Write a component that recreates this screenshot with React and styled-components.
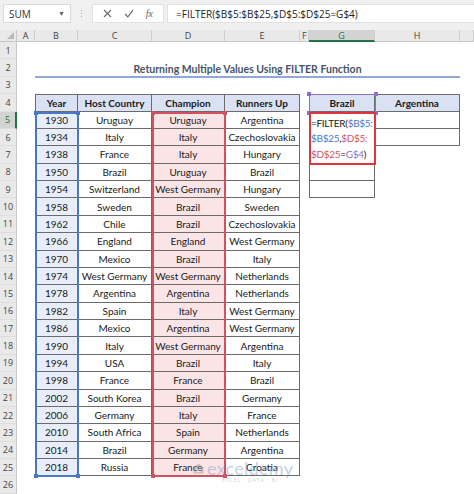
import React from "react";
import styled, { createGlobalStyle } from "styled-components";

const GlobalStyle = createGlobalStyle`
  html, body { margin: 0; padding: 0; background: #ffffff; }
  body { font-family: "Lato", "Liberation Sans", sans-serif; }
`;

const ROW_H = 17.38;

const Sheet = styled.div`
  position: relative;
  width: 474px;
  height: 494px;
  overflow: hidden;
  background: #ffffff;
`;

const FormulaBar = styled.div`
  height: 30px;
  box-sizing: border-box;
  background: #f0f0f0;
  display: flex;
  align-items: flex-start;
  padding: 4px 0 0 3px;
`;

const NameBox = styled.div`
  width: 68px;
  height: 19px;
  box-sizing: border-box;
  background: #fff;
  border: 1px solid #dadada;
  display: flex;
  align-items: center;
  justify-content: space-between;
  padding: 0 5px 0 5px;
  font-family: "Open Sans", "Liberation Sans", sans-serif;
  font-size: 10px;
  color: #333;
`;

const Caret = styled.span`
  font-size: 7px;
  color: #666;
`;

const Dots = styled.div`
  width: 21px;
  height: 19px;
  display: flex;
  flex-direction: column;
  align-items: center;
  justify-content: center;
  gap: 2px;
  & > i {
    display: block;
    width: 1px;
    height: 1px;
    background: #a8a8a8;
  }
`;

const IconBox = styled.div`
  width: 72px;
  height: 19px;
  box-sizing: border-box;
  background: #fff;
  border: 1px solid #e2e2e2;
  display: flex;
  align-items: center;
  justify-content: space-around;
  padding: 0 4px;
  color: #6a6a6a;
`;

const Fx = styled.span`
  font-family: "Liberation Serif", serif;
  font-style: italic;
  font-size: 10px;
  color: #666;
`;

const FormulaInput = styled.div`
  flex: 1;
  height: 19px;
  margin-left: 3px;
  box-sizing: border-box;
  background: #fff;
  border: 1px solid #e2e2e2;
  border-right: none;
  display: flex;
  align-items: center;
  padding-left: 8px;
  font-family: "Open Sans", "Liberation Sans", sans-serif;
  font-size: 10px;
  color: #222;
  white-space: nowrap;
`;

const Grid = styled.div`
  display: grid;
  grid-template-columns: 17px 18px 43px 74px 73px 75px 9px 66px 85px 1fr;
  grid-template-rows: 12px repeat(26, ${ROW_H}px);
`;

const Corner = styled.div`
  grid-row: 1;
  grid-column: 1;
  background: #e9e9e9;
  border-bottom: 1px solid #c8c8c8;
  border-right: 1px solid #c8c8c8;
  box-sizing: border-box;
  position: relative;
  &::after {
    content: "";
    position: absolute;
    right: 2px;
    bottom: 2px;
    border-left: 7px solid transparent;
    border-bottom: 7px solid #b8b8b8;
  }
`;

const ColHead = styled.div`
  grid-row: 1;
  grid-column: ${(p) => p.$c};
  box-sizing: border-box;
  background: ${(p) => (p.$active ? "#d3d3d3" : "#e9e9e9")};
  border-right: 1px solid #cdcdcd;
  border-bottom: ${(p) => (p.$active ? "2px solid #217346" : "1px solid #c8c8c8")};
  display: flex;
  align-items: center;
  justify-content: ${(p) => (p.$left ? "flex-start" : "center")};
  padding-left: ${(p) => (p.$left ? "2px" : "0")};
  font-family: "Open Sans", "Liberation Sans", sans-serif;
  font-size: 9px;
  color: ${(p) => (p.$active ? "#3d6b50" : "#444")};
  overflow: hidden;
`;

const RowHead = styled.div`
  grid-row: ${(p) => p.$r};
  grid-column: 1;
  box-sizing: border-box;
  background: ${(p) => (p.$active ? "#d3d3d3" : "#e9e9e9")};
  border-right: ${(p) => (p.$active ? "2px solid #217346" : "1px solid #c8c8c8")};
  border-bottom: 1px solid #dedede;
  display: flex;
  align-items: center;
  justify-content: center;
  font-family: "Open Sans", "Liberation Sans", sans-serif;
  font-size: 9px;
  color: ${(p) => (p.$active ? "#217346" : "#444")};
`;

const Title = styled.div`
  grid-row: 3;
  grid-column: 3 / 10;
  box-sizing: border-box;
  border-bottom: 2px solid #8eaadb;
  display: flex;
  align-items: flex-end;
  justify-content: center;
  padding-bottom: 1px;
  font-size: 10.5px;
  font-weight: 700;
  color: #44546a;
  white-space: nowrap;
  transform: translateY(1px);
`;

const tones = {
  head: "#d9e1f2",
  blue: "#e7eef9",
  pink: "#fbe4e6",
  none: "#ffffff",
};

const Cell = styled.div`
  grid-row: ${(p) => p.$r};
  grid-column: ${(p) => p.$c};
  box-sizing: border-box;
  background: ${(p) => tones[p.$tone || "none"]};
  border-right: 1px solid #6b6b6b;
  border-bottom: 1px solid #6b6b6b;
  border-left: ${(p) => (p.$first ? "1px solid #6b6b6b" : "none")};
  border-top: ${(p) => (p.$top ? "1px solid #6b6b6b" : "none")};
  display: flex;
  align-items: center;
  justify-content: center;
  font-size: 10px;
  font-weight: ${(p) => (p.$bold ? 700 : 400)};
  color: #1a1a1a;
  white-space: nowrap;
`;

const Highlight = styled.div`
  grid-row: ${(p) => p.$rows};
  grid-column: ${(p) => p.$cols};
  position: relative;
  z-index: 2;
  box-sizing: border-box;
  margin: 0 -1px -1px 0;
  border: ${(p) => p.$w}px solid ${(p) => p.$color};
  pointer-events: none;
`;

const Handle = styled.span`
  position: absolute;
  width: 4px;
  height: 4px;
  background: ${(p) => p.$color};
  ${(p) => (p.$top ? "top: -3px;" : "bottom: -3px;")}
  ${(p) => (p.$leftSide ? "left: -3px;" : "right: -3px;")}
`;

const FormulaCell = styled.div`
  grid-row: 6 / 9;
  grid-column: 8;
  position: relative;
  z-index: 3;
  box-sizing: border-box;
  margin: 0 -1px -1px 0;
  border: 2px solid #e2343c;
  padding: 2px 0 0 0;
  font-size: 10px;
  letter-spacing: -0.3px;
  line-height: 15.5px;
  color: #1a1a1a;
  white-space: pre;
  background: #fff;
`;

const Ref = styled.span`
  color: ${(p) => p.$color};
`;

const Watermark = styled.div`
  position: absolute;
  left: 193px;
  top: 459px;
  display: flex;
  align-items: flex-start;
  gap: 3px;
  opacity: 0.4;
  pointer-events: none;
  z-index: 5;
`;

const MarkText = styled.div`
  display: flex;
  flex-direction: column;
  align-items: center;
  line-height: 1;
`;

const MarkWord = styled.span`
  font-family: "Lato", sans-serif;
  font-size: 18px;
  color: #6f8cc4;
  letter-spacing: 0.3px;
`;

const MarkSub = styled.span`
  font-family: "Open Sans", sans-serif;
  font-size: 5px;
  letter-spacing: 1px;
  color: #8a8a8a;
  margin-top: 1px;
`;

const data = [
  [1930, "Uruguay", "Uruguay", "Argentina"],
  [1934, "Italy", "Italy", "Czechoslovakia"],
  [1938, "France", "Italy", "Hungary"],
  [1950, "Brazil", "Uruguay", "Brazil"],
  [1954, "Switzerland", "West Germany", "Hungary"],
  [1958, "Sweden", "Brazil", "Sweden"],
  [1962, "Chile", "Brazil", "Czechoslovakia"],
  [1966, "England", "England", "West Germany"],
  [1970, "Mexico", "Brazil", "Italy"],
  [1974, "West Germany", "West Germany", "Netherlands"],
  [1978, "Argentina", "Argentina", "Netherlands"],
  [1982, "Spain", "Italy", "West Germany"],
  [1986, "Mexico", "Argentina", "West Germany"],
  [1990, "Italy", "West Germany", "Argentina"],
  [1994, "USA", "Brazil", "Italy"],
  [1998, "France", "France", "Brazil"],
  [2002, "South Korea", "Brazil", "Germany"],
  [2006, "Germany", "Italy", "France"],
  [2010, "South Africa", "Spain", "Netherlands"],
  [2014, "Brazil", "Germany", "Argentina"],
  [2018, "Russia", "France", "Croatia"],
];

const columns = ["A", "B", "C", "D", "E", "F", "G", "H", ""];

function Handles({ color }) {
  return (
    <>
      <Handle $color={color} $top $leftSide />
      <Handle $color={color} $top />
      <Handle $color={color} $leftSide />
      <Handle $color={color} />
    </>
  );
}

function XIcon() {
  return (
    <svg width="9" height="9" viewBox="0 0 9 9">
      <path d="M1 1 L8 8 M8 1 L1 8" stroke="#6a6a6a" strokeWidth="1.1" fill="none" />
    </svg>
  );
}

function CheckIcon() {
  return (
    <svg width="10" height="9" viewBox="0 0 10 9">
      <path d="M1 5 L3.8 7.8 L9 1.2" stroke="#6a6a6a" strokeWidth="1.2" fill="none" />
    </svg>
  );
}

function LogoIcon() {
  return (
    <svg width="11" height="11" viewBox="0 0 12 12" style={{ marginTop: 4 }}>
      <path d="M6 0.5 L11.5 4.5 L11.5 11.5 L0.5 11.5 L0.5 4.5 Z" fill="#8d8d8d" />
      <path d="M3.5 7 L8.5 7 M3.5 9 L8.5 9" stroke="#fff" strokeWidth="1" />
    </svg>
  );
}

export default function App() {
  return (
    <>
      <GlobalStyle />
      <Sheet>
        <FormulaBar>
          <NameBox>
            SUM
            <Caret>▼</Caret>
          </NameBox>
          <Dots>
            <i />
            <i />
            <i />
          </Dots>
          <IconBox>
            <XIcon />
            <CheckIcon />
            <Fx>fx</Fx>
          </IconBox>
          <FormulaInput>=FILTER($B$5:$B$25,$D$5:$D$25=G$4)</FormulaInput>
        </FormulaBar>
        <Grid>
          <Corner />
          {columns.map((c, i) => (
            <ColHead key={i} $c={i + 2} $active={c === "G"} $left={c === "F"}>
              {c}
            </ColHead>
          ))}
          {Array.from({ length: 26 }, (_, i) => (
            <RowHead key={i} $r={i + 2} $active={i + 1 === 5}>
              {i + 1}
            </RowHead>
          ))}

          <Title>Returning Multiple Values Using FILTER Function</Title>

          {["Year", "Host Country", "Champion", "Runners Up"].map((h, i) => (
            <Cell key={h} $r={5} $c={i + 3} $tone="head" $bold $top $first={i === 0}>
              {h}
            </Cell>
          ))}
          {data.map((row, ri) =>
            row.map((v, ci) => (
              <Cell
                key={`${ri}-${ci}`}
                $r={ri + 6}
                $c={ci + 3}
                $first={ci === 0}
                $tone={ci === 0 ? "blue" : ci === 2 ? "pink" : "none"}
              >
                {v}
              </Cell>
            ))
          )}

          <Cell $r={5} $c={8} $tone="head" $bold $top $first>
            Brazil
          </Cell>
          <Cell $r={5} $c={9} $tone="head" $bold $top>
            Argentina
          </Cell>
          {[6, 7, 8, 9, 10].map((r) => (
            <Cell key={`g${r}`} $r={r} $c={8} $first />
          ))}
          {[6, 7].map((r) => (
            <Cell key={`h${r}`} $r={r} $c={9} />
          ))}

          <Highlight $rows="6 / 27" $cols="3" $w={2} $color="#4a78c8">
            <Handles color="#4a78c8" />
          </Highlight>
          <Highlight $rows="6 / 27" $cols="5" $w={2} $color="#d2525f">
            <Handles color="#d2525f" />
          </Highlight>
          <Highlight $rows="5" $cols="8" $w={1} $color="#8f6fcc">
            <Handles color="#8f6fcc" />
          </Highlight>
          <FormulaCell>
            {"=FILTER("}
            <Ref $color="#4a78c8">{"$B$5:\n$B$25"}</Ref>
            {","}
            <Ref $color="#d2525f">{"$D$5:\n$D$25"}</Ref>
            {"="}
            <Ref $color="#8f6fcc">G$4</Ref>
            {")"}
          </FormulaCell>
        </Grid>
        <Watermark>
          <LogoIcon />
          <MarkText>
            <MarkWord>exceldemy</MarkWord>
            <MarkSub>EXCEL · DATA · BI</MarkSub>
          </MarkText>
        </Watermark>
      </Sheet>
    </>
  );
}
